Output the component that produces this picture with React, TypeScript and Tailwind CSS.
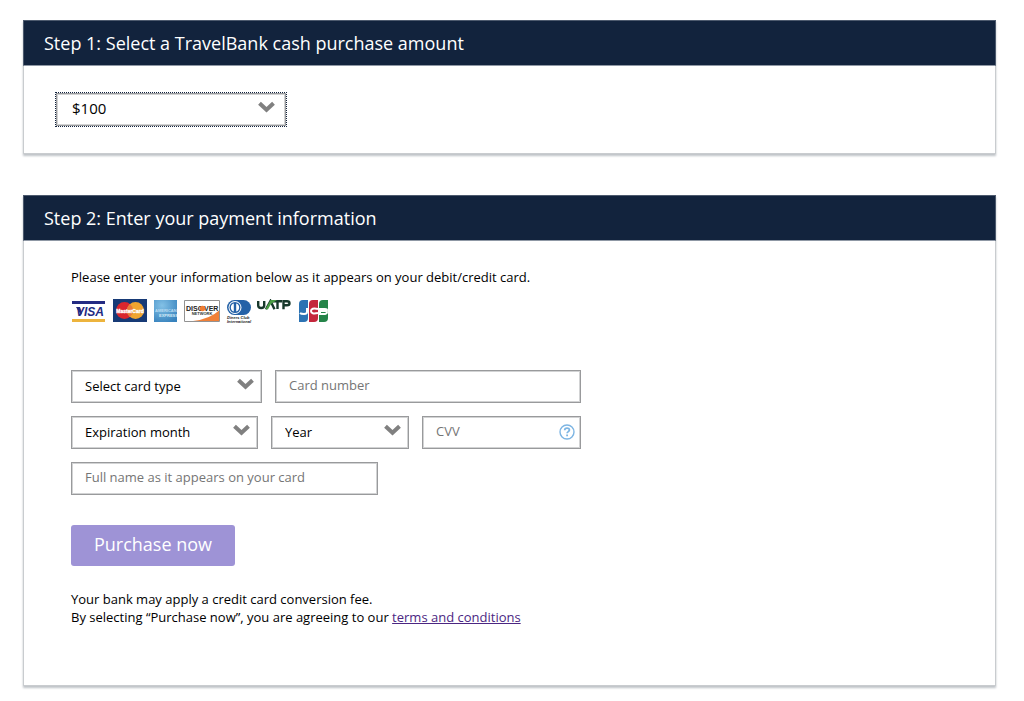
import type { InputHTMLAttributes, ReactNode, SelectHTMLAttributes } from "react";

function Panel({ title, children }: { title: string; children: ReactNode }) {
  return (
    <section className="border border-[#c9cccf] bg-white shadow-[0_2px_2px_#bfc3c8]">
      <h2 className="-mx-px -mt-px flex h-[46px] items-center border border-[#4d5a6e] border-b-[#8f98a5] bg-[#12233d] px-5 text-lg text-white">
        {title}
      </h2>
      {children}
    </section>
  );
}

type SelectProps = SelectHTMLAttributes<HTMLSelectElement> & {
  label: string;
  options: string[];
  width: string;
  chevron?: string;
};

function Select({ label, options, width, chevron = "right-2", className = "pl-[13px]", ...rest }: SelectProps) {
  return (
    <div className={`relative ${width}`}>
      <select
        aria-label={label}
        className={`block h-[33px] w-full appearance-none border border-[#999a9c] bg-white pr-8 text-black shadow-[inset_0_0_0_1px_#d2d3d4] ${className}`}
        {...rest}
      >
        {options.map((option) => (
          <option key={option}>{option}</option>
        ))}
      </select>
      <svg
        className={`pointer-events-none absolute top-2 h-3 w-[17px] ${chevron}`}
        viewBox="0 0 17 12"
        fill="none"
        stroke="#808080"
        strokeWidth="4"
        aria-hidden="true"
      >
        <path d="M1.5 2.2 8.5 8.8 15.5 2.2" />
      </svg>
    </div>
  );
}

function Field({ label, className = "", ...rest }: InputHTMLAttributes<HTMLInputElement> & { label: string }) {
  return (
    <input
      aria-label={label}
      placeholder={label}
      className={`h-[33px] border border-[#999a9c] bg-white px-[13px] pb-[3px] text-black shadow-[inset_0_0_0_1px_#d2d3d4] placeholder:text-[#757575] ${className}`}
      {...rest}
    />
  );
}

function CardLogos() {
  return (
    <div className="flex items-start font-['Liberation_Sans',sans-serif]">
      <svg className="mr-[7px]" width="35" height="24" viewBox="0 0 35 24" role="img" aria-label="Visa">
        <path fill="#232b82" d="M1 2h33v3H1z" />
        <path fill="#edb43d" d="M1 20h33v3H1z" />
        <path fill="#232b82" d="M5 8h4l2 6-1 2z" />
        <text x="19" y="17" textAnchor="middle" fontSize="12" fontWeight="700" fontStyle="italic" fill="#232b82">
          VISA
        </text>
      </svg>
      <svg className="mr-[7px]" width="34" height="24" viewBox="0 0 34 24" role="img" aria-label="MasterCard">
        <path fill="#173a76" d="M0 0h34v23H0z" />
        <circle cx="11.5" cy="11.5" r="8.5" fill="#d9262e" />
        <circle cx="22.5" cy="11.5" r="8.5" fill="#f0a530" />
        <path fill="#e8793a" d="M17 5a8.5 8.5 0 0 1 0 13a8.5 8.5 0 0 1 0-13" />
        <text x="17" y="14" textAnchor="middle" fontSize="5" fontWeight="700" fill="#fff" stroke="#fff" strokeWidth=".3">
          MasterCard
        </text>
      </svg>
      <svg className="mr-[7px]" width="23" height="24" viewBox="0 0 23 24" role="img" aria-label="American Express">
        <defs>
          <radialGradient id="amex" cx="35%" cy="25%" r="85%">
            <stop offset="0" stopColor="#83c1e6" />
            <stop offset="1" stopColor="#3782bd" />
          </radialGradient>
        </defs>
        <path fill="url(#amex)" d="M0 1h23v22H0z" />
        <text x="1" y="13" fontSize="4" fontWeight="700" fill="#b9dcf2">
          AMERICAN
        </text>
        <text x="5" y="18" fontSize="4" fontWeight="700" fill="#d5ebf7">
          EXPRESS
        </text>
      </svg>
      <svg className="mr-[6px]" width="36" height="24" viewBox="0 0 36 24" role="img" aria-label="Discover">
        <path fill="#fff" stroke="#929292" d="M.5 1.5h35v21H.5z" />
        <path fill="#f08038" d="M35 11.500V22H9Q26 20 35 11.500" />
        <g fontSize="7" fontWeight="700" fill="#222">
          <text x="2" y="12">
            DISC
          </text>
          <text x="20" y="12">
            VER
          </text>
        </g>
        <circle cx="18.500" cy="9.500" r="2.800" fill="#ef7d32" />
        <text x="18" y="16" textAnchor="middle" fontSize="4" fontWeight="700" fill="#333">
          NETWORK
        </text>
      </svg>
      <svg className="mr-[5px]" width="26" height="24" viewBox="0 0 26 24" role="img" aria-label="Diners Club International">
        <rect x="1" y="1" width="24" height="15" rx="7.500" fill="#2562a7" />
        <circle cx="9" cy="8.500" r="6.500" fill="#fff" />
        <circle cx="9" cy="8.500" r="5.500" fill="#2562a7" />
        <path fill="#fff" d="M7.800 4.500v8a4.200 4.200 0 0 1 0-8m2.400 0v8a4.200 4.200 0 0 0 0-8" />
        <text x="1" y="20" fontSize="4" fontWeight="700" fontStyle="italic" fill="#222">
          Diners Club
        </text>
        <text x="1" y="24" fontSize="4" fontWeight="700" fontStyle="italic" fill="#222">
          International
        </text>
      </svg>
      <svg className="mr-[7px]" width="35" height="12" viewBox="0 0 35 12" role="img" aria-label="UATP">
        <g fill="none" stroke="#17382b" strokeWidth="2.400">
          <path d="M1.200 2v4.500q0 2.500 3 2.500t3-2.500V2" />
          <path d="m9 10.300 4.500-8.300 4 8.300" />
          <path d="M15.500 2.200H25M20.500 2v8" />
          <path d="M26.500 10.300V2.200H30q2.500 0 2.500 2t-2.500 2h-3.500" />
        </g>
        <path fill="#4a9c45" d="m13.500 1-5.200 9.300H11L14 5l6-4z" />
      </svg>
      <svg width="30" height="24" viewBox="0 0 30 24" role="img" aria-label="JCB">
        <path fill="#2c73b3" d="M4 1h5v18q0 4-4 4H0V5q0-4 4-4" />
        <path fill="#c4273c" d="M14 1h5v18q0 4-4 4h-5V5q0-4 4-4" />
        <path fill="#258449" d="M24 1h5v18q0 4-4 4h-5V5q0-4 4-4" />
        <g fill="none" stroke="#fff" strokeWidth="2">
          <path d="M8 9v4q0 2-3 2t-4-1" />
          <path d="M19 10q-7-1.500-7 2t7 2" />
          <path d="M21 10h5q2 0 2 1t-2 1h-5h5q2 0 2 1.200T26 15h-5V9" />
        </g>
      </svg>
    </div>
  );
}

export default function App() {
  return (
    <main className="flex flex-col gap-[41px] bg-white pt-5 pr-7 pb-[15px] pl-[23px] font-['Open_Sans',sans-serif] text-[13px] text-black">
      <Panel title="Step 1: Select a TravelBank cash purchase amount">
        <div className="px-8 py-[27px]">
          <Select
            label="Cash purchase amount"
            width="w-[230px]"
            chevron="right-[11px]"
            className="pb-0.5 pl-[15px] text-[15px] outline-1 outline-dotted outline-[#12233d]"
            options={["$100", "$200", "$300", "$400", "$500"]}
          />
        </div>
      </Panel>

      <Panel title="Step 2: Enter your payment information">
        <form className="px-[47px] pt-[26px] pb-[59px]" onSubmit={(event) => event.preventDefault()}>
          <p className="leading-5">Please enter your information below as it appears on your debit/credit card.</p>
          <div className="mt-3">
            <CardLogos />
          </div>

          <div className="mt-[47px] flex w-[510px] max-w-full flex-col gap-[13px]">
            <div className="flex gap-[13px]">
              <Select label="Card type" width="w-[191px]" options={["Select card type", "Visa", "MasterCard", "American Express"]} />
              <Field label="Card number" className="min-w-0 flex-1" />
            </div>
            <div className="flex gap-[13px]">
              <Select label="Expiration month" width="w-[187px]" options={["Expiration month", "01", "02", "03", "04", "05", "06"]} />
              <Select label="Year" width="w-[138px]" options={["Year", "2017", "2018", "2019", "2020"]} />
              <div className="relative min-w-0 flex-1">
                <Field label="CVV" className="w-full" />
                <button type="button" aria-label="What is a CVV?" className="absolute top-2 right-[6px]">
                  <svg width="16" height="16" viewBox="0 0 16 16" fill="none" stroke="#7db5e3" aria-hidden="true">
                    <circle cx="8" cy="8" r="7" strokeWidth="1.400" />
                    <path strokeWidth="1.800" d="M5.700 6.300c0-3 4.700-2.900 4.700-.2 0 1.500-2.300 1.600-2.300 3.200M8.100 10.400v1.800" />
                  </svg>
                </button>
              </div>
            </div>
            <Field label="Full name as it appears on your card" className="w-[307px]" />
          </div>

          <button type="submit" className="mt-[30px] h-[41px] w-[164px] rounded-[3px] bg-[#9e93d6] pb-1 text-lg text-white">
            Purchase now
          </button>

          <p className="mt-6 leading-[18px]">
            Your bank may apply a credit card conversion fee.
            <br />
            By selecting “Purchase now”, you are agreeing to our{" "}
            <a href="#terms" className="text-[#4b2682] underline">
              terms and conditions
            </a>
          </p>
        </form>
      </Panel>
    </main>
  );
}
